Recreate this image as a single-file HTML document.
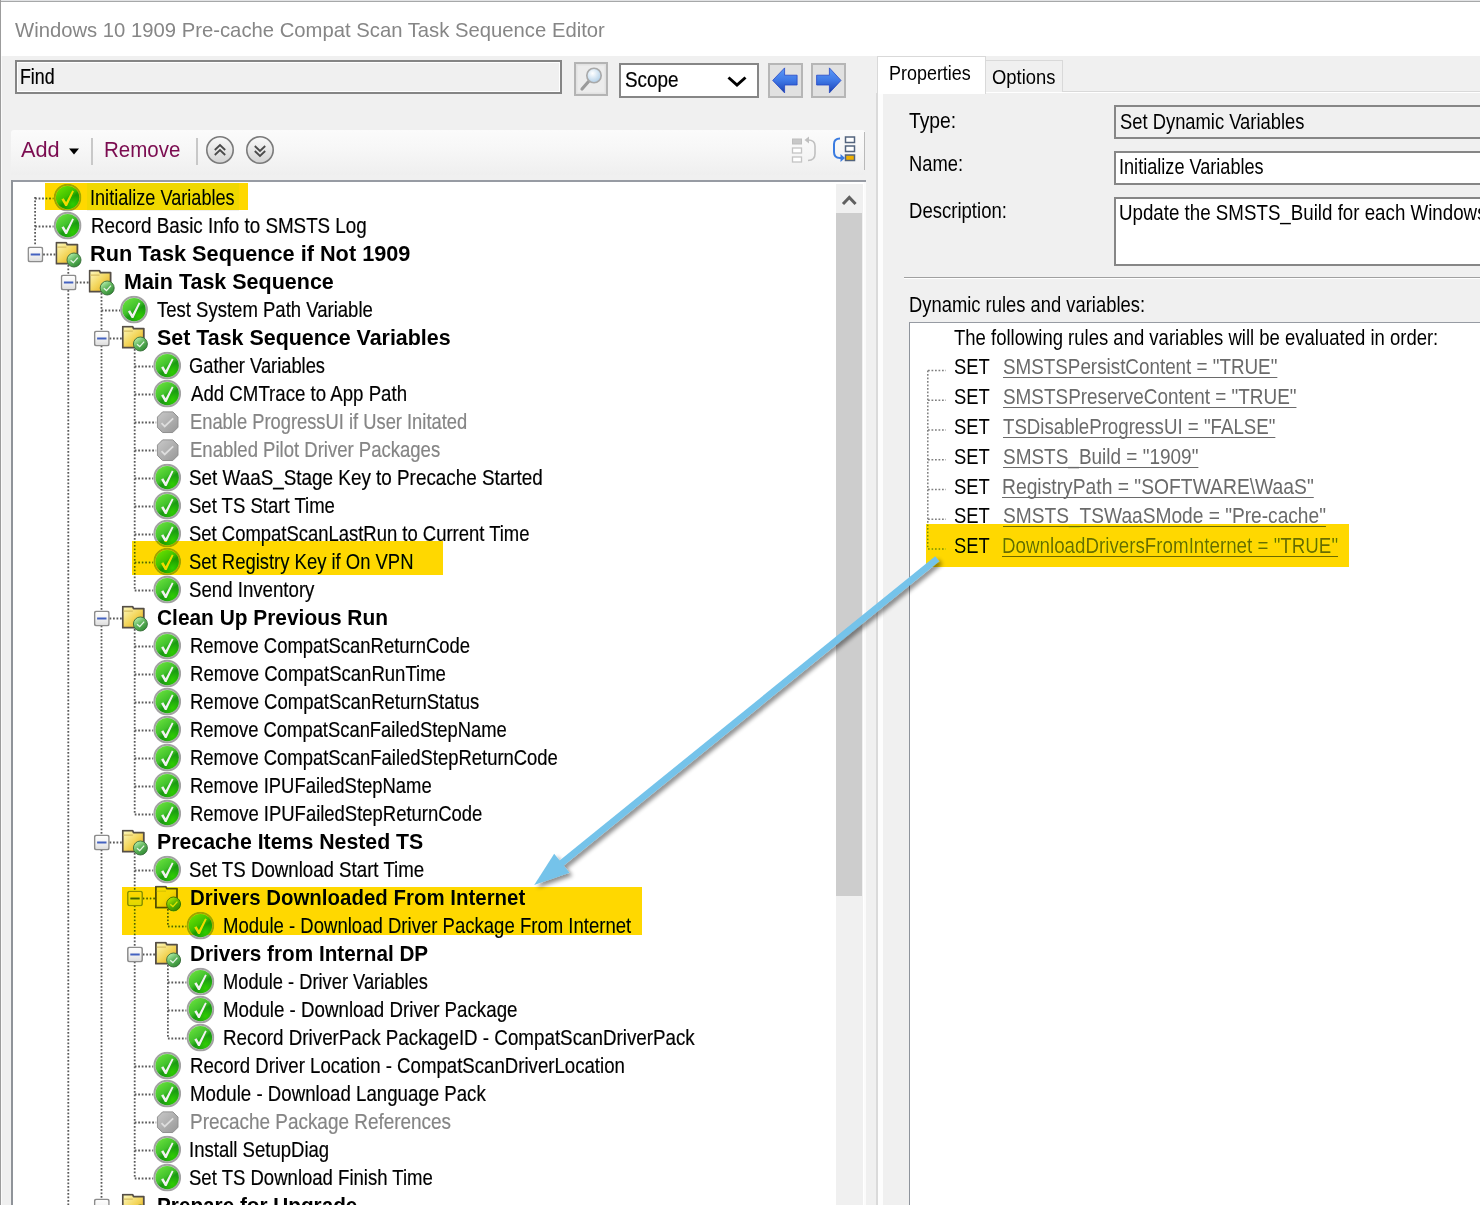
<!DOCTYPE html><html><head><meta charset="utf-8"><style>
html,body{margin:0;padding:0}
body{width:1480px;height:1205px;position:relative;overflow:hidden;background:#f0f0f0;font-family:"Liberation Sans",sans-serif}
.a{position:absolute}
.t{position:absolute;white-space:nowrap;line-height:1;transform-origin:0 0;font-family:"Liberation Sans",sans-serif;-webkit-text-stroke:0.2px currentColor}
</style></head><body>
<div class="a" style="left:0px;top:0px;width:1480px;height:1px;background:#e2e3e5"></div>
<div class="a" style="left:0px;top:1px;width:1480px;height:1px;background:#a6a8a9"></div>
<div class="a" style="left:0px;top:0px;width:1px;height:1205px;background:#9c9c9c"></div>
<div class="a" style="left:1px;top:2px;width:1479px;height:54px;background:#fff"></div>
<div class="a" style="left:1px;top:56px;width:1px;height:1149px;background:#fafafa"></div>
<div class="a" style="left:15px;top:60px;width:547px;height:34px;border:2px solid #858585;box-sizing:border-box;background:#f0f0f0;box-shadow:inset 0 0 0 1px #fff"></div>
<div class="a" style="left:574px;top:62px;width:34px;height:34px;border:2px solid #b4b4b4;box-sizing:border-box;background:#ececec;box-shadow:inset 0 0 0 1.5px #e2e2e2"></div>
<svg class="a" style="left:574px;top:62px" width="34" height="34" viewBox="0 0 34 34">
<defs><radialGradient id="lens" cx="40%" cy="35%" r="60%"><stop offset="0" stop-color="#ffffff"/><stop offset="1" stop-color="#b9d4ea"/></radialGradient></defs>
<line x1="8" y1="27" x2="15" y2="19" stroke="#9a9a9a" stroke-width="3.2" stroke-linecap="round"/>
<circle cx="20" cy="13.5" r="7.2" fill="url(#lens)" stroke="#a9a9a9" stroke-width="1.6"/>
</svg>
<div class="a" style="left:619px;top:63px;width:140px;height:35px;border:2px solid #868686;box-sizing:border-box;background:#fff"></div>
<svg class="a" style="left:726px;top:75px" width="22" height="13" viewBox="0 0 22 13"><path d="M2.5 2.5 L11 10 L19.5 2.5" fill="none" stroke="#000" stroke-width="3"/></svg>
<div class="a" style="left:768px;top:63px;width:35px;height:35px;border:2px solid #b6b6b6;box-sizing:border-box;background:#e1e1e1"></div>
<div class="a" style="left:811px;top:63px;width:35px;height:35px;border:2px solid #b6b6b6;box-sizing:border-box;background:#e1e1e1"></div>
<svg class="a" style="left:768px;top:63px" width="35" height="35" viewBox="0 0 35 35">
<defs><linearGradient id="ab" x1="0" y1="0" x2="0" y2="1"><stop offset="0" stop-color="#5c9af6"/><stop offset="0.5" stop-color="#3f78e6"/><stop offset="0.8" stop-color="#2a58c8"/><stop offset="1" stop-color="#1e3a8a"/></linearGradient></defs>
<path d="M4.7 17.4 L16.6 4.9 L16.6 12.2 L29.1 12.2 L29.1 22 L16.6 22 L16.6 29.9 Z" fill="url(#ab)" stroke="#2447c8" stroke-width="0.8"/>
</svg>
<svg class="a" style="left:811px;top:63px" width="35" height="35" viewBox="0 0 35 35">
<path d="M30 17.4 L18.4 4.9 L18.4 12.2 L5.6 12.2 L5.6 22 L18.4 22 L18.4 29.9 Z" fill="url(#ab)" stroke="#2447c8" stroke-width="0.8"/>
</svg>
<div class="a" style="left:11px;top:130px;width:854px;height:45px;background:linear-gradient(#fbfbfb,#f7f7f7 40%,#efefef);border-radius:3px 3px 0 0"></div>
<div class="a" style="left:864px;top:132px;width:1px;height:38px;background:#b9b9b9"></div>
<svg class="a" style="left:68px;top:147px" width="12" height="9" viewBox="0 0 12 9"><path d="M1 1.5 L11 1.5 L6 7.5Z" fill="#000"/></svg>
<div class="a" style="left:91px;top:138px;width:1.5px;height:27px;background:#c8c8c8"></div>
<div class="a" style="left:196px;top:138px;width:1.5px;height:27px;background:#c8c8c8"></div>
<svg class="a" style="left:202px;top:132px" width="36" height="36" viewBox="0 0 36 36">
<defs><linearGradient id="cb220" x1="0" y1="0" x2="0" y2="1"><stop offset="0" stop-color="#fafafa"/><stop offset="1" stop-color="#d2d2d2"/></linearGradient></defs>
<circle cx="18" cy="18" r="13.2" fill="url(#cb220)" stroke="#7a7a7a" stroke-width="1.6"/>
<path d="M12.8 18 L18 13 L23.2 18 M12.8 23 L18 18 L23.2 23" fill="none" stroke="#4a4a4a" stroke-width="1.8"/></svg>
<svg class="a" style="left:241.7px;top:132px" width="36" height="36" viewBox="0 0 36 36">
<defs><linearGradient id="cb259" x1="0" y1="0" x2="0" y2="1"><stop offset="0" stop-color="#fafafa"/><stop offset="1" stop-color="#d2d2d2"/></linearGradient></defs>
<circle cx="18" cy="18" r="13.2" fill="url(#cb259)" stroke="#7a7a7a" stroke-width="1.6"/>
<path d="M12.8 14 L18 19 L23.2 14 M12.8 19 L18 24 L23.2 19" fill="none" stroke="#4a4a4a" stroke-width="1.8"/></svg>
<svg class="a" style="left:790px;top:135px" width="30" height="30" viewBox="0 0 30 30">
<rect x="2.5" y="4" width="9" height="5" fill="#c8c8c8" stroke="#bdbdbd"/>
<rect x="2.5" y="13" width="9" height="5" fill="#fff" stroke="#c4c4c4" stroke-width="1.3"/>
<rect x="2.5" y="22" width="9" height="5" fill="#fff" stroke="#c4c4c4" stroke-width="1.3"/>
<path d="M18 25.5 Q25 25.5 25 19 L25 11 Q25 5 18 5" fill="none" stroke="#c0c0c0" stroke-width="1.6"/>
<path d="M14.5 5 L19 1.5 L19 8.5Z" fill="#c0c0c0"/>
</svg>
<svg class="a" style="left:830px;top:135px" width="30" height="30" viewBox="0 0 30 30">
<rect x="15.5" y="2" width="9" height="5.5" fill="#fff" stroke="#53647e" stroke-width="1.5"/>
<rect x="15.5" y="11" width="9" height="5.5" fill="#fff" stroke="#53647e" stroke-width="1.5"/>
<rect x="15.5" y="20" width="9" height="5.5" fill="#f0b000" stroke="#53647e" stroke-width="1.5"/>
<path d="M10 3.5 Q4 3.5 4 9 L4 17 Q4 23 10 23 L12 23" fill="none" stroke="#3a7be0" stroke-width="2"/>
<path d="M10.5 19 L15 23 L10.5 27Z" fill="#3a7be0"/>
</svg>
<div class="a" style="left:11px;top:180px;width:855px;height:1025px;background:#fff"></div>
<div class="a" style="left:11px;top:180px;width:855px;height:2px;background:#979ba3"></div>
<div class="a" style="left:11px;top:180px;width:2px;height:1025px;background:#8f9399"></div>
<div class="a" style="left:864px;top:182px;width:2px;height:1023px;background:#fbfbfb"></div>
<div class="a" style="left:836px;top:184px;width:27px;height:1021px;background:#f0f0f0"></div>
<div class="a" style="left:836px;top:213px;width:26px;height:683px;background:#cdcdcd"></div>
<svg class="a" style="left:836px;top:184px" width="27" height="29" viewBox="0 0 27 29"><path d="M7 20 L13.3 13.5 L19.6 20" fill="none" stroke="#606060" stroke-width="3"/></svg>
<div class="a" style="left:866px;top:56px;width:11px;height:1149px;background:#f0f0f0"></div>
<div class="a" style="left:876px;top:93px;width:1.6000000000000227px;height:1112px;background:#dadada"></div>
<div class="a" style="left:877.6px;top:93px;width:5.399999999999977px;height:1112px;background:#fdfdfd"></div>
<svg class="a" style="left:0;top:0" width="836" height="1205" viewBox="0 0 836 1205">
<defs>
<linearGradient id="gg" x1="0.2" y1="0.1" x2="0.8" y2="0.9"><stop offset="0" stop-color="#62dc3a"/><stop offset="0.42" stop-color="#42c22c"/><stop offset="0.62" stop-color="#1a9a12"/><stop offset="1" stop-color="#22a812"/></linearGradient>
<radialGradient id="gr" cx="0.72" cy="0.78" r="0.4"><stop offset="0" stop-color="#30d000" stop-opacity="0.9"/><stop offset="1" stop-color="#30d000" stop-opacity="0"/></radialGradient>
<linearGradient id="dg" x1="0.1" y1="0.1" x2="0.9" y2="0.9"><stop offset="0" stop-color="#c4c4c4"/><stop offset="1" stop-color="#9c9c9c"/></linearGradient>
<linearGradient id="fg" x1="0.1" y1="0.1" x2="0.9" y2="0.95"><stop offset="0" stop-color="#fbf3b0"/><stop offset="0.5" stop-color="#f3d65c"/><stop offset="1" stop-color="#e6a91c"/></linearGradient>
<linearGradient id="bg2" x1="0.2" y1="0.1" x2="0.8" y2="0.95"><stop offset="0" stop-color="#b0eca8"/><stop offset="0.45" stop-color="#5fb45c"/><stop offset="1" stop-color="#2f8a32"/></linearGradient>
<linearGradient id="mg" x1="0" y1="0" x2="0" y2="1"><stop offset="0" stop-color="#ffffff"/><stop offset="0.5" stop-color="#f3f3f3"/><stop offset="1" stop-color="#dcdcdc"/></linearGradient>
<symbol id="ck" viewBox="0 0 28 28">
<circle cx="14" cy="14" r="12.9" fill="#e2e2e2" stroke="#a2a2a2" stroke-width="2"/>
<circle cx="14" cy="14" r="11.7" fill="url(#gg)"/>
<circle cx="14" cy="14" r="11.7" fill="url(#gr)"/>
<path d="M7.9 15.9 L10.1 14.6 L12.5 18.6 L18.7 6.9 L20.3 7.6 L13.4 22.4 L11.7 22.4 Z" fill="#f2f2f2"/>
</symbol>
<symbol id="dis" viewBox="0 0 22 22">
<path d="M6 0.6 L16 0.6 L21.4 6 L21.4 16 L16 21.4 L6 21.4 L0.6 16 L0.6 6 Z" fill="url(#dg)" stroke="#8a8a8a" stroke-width="1"/>
<path d="M4.8 12 L8 15.2 L16.5 7.2" fill="none" stroke="#dedede" stroke-width="1.8"/>
</symbol>
<symbol id="fd" viewBox="0 0 30 28">
<path d="M0.9 1 L10.8 1 L11.8 3 L22 3 L22 22.1 L0.9 22.1 Z" fill="url(#fg)" stroke="#554e46" stroke-width="1.8" stroke-linejoin="round"/>
<path d="M1.8 5.6 L11 5.6" stroke="#d6bd62" stroke-width="1.3"/>
<circle cx="18.6" cy="18.4" r="7" fill="url(#bg2)" stroke="#356b37" stroke-width="0.9"/>
<path d="M15.2 18.6 L17.9 21 L22.4 16" fill="none" stroke="#e4f4e4" stroke-width="1.3"/>
</symbol>
<symbol id="mb" viewBox="0 0 16 16">
<rect x="0.8" y="0.8" width="14.4" height="14.4" rx="2" fill="url(#mg)" stroke="#8c8c8c" stroke-width="1.5"/>
<rect x="3.3" y="7" width="9.4" height="2" fill="#4462c0"/>
</symbol>
</defs>
<line x1="68.30000000000001" y1="290" x2="68.30000000000001" y2="1205" stroke="#5a5a5a" stroke-width="1.8" stroke-dasharray="1.75 1.75"/>
<line x1="35.1" y1="197" x2="35.1" y2="246" stroke="#5a5a5a" stroke-width="1.8" stroke-dasharray="1.75 1.75"/>
<line x1="68.30000000000001" y1="265" x2="68.30000000000001" y2="274" stroke="#5a5a5a" stroke-width="1.8" stroke-dasharray="1.75 1.75"/>
<line x1="101.5" y1="293" x2="101.5" y2="1205" stroke="#5a5a5a" stroke-width="1.8" stroke-dasharray="1.75 1.75"/>
<line x1="134.70000000000002" y1="349" x2="134.70000000000002" y2="589" stroke="#5a5a5a" stroke-width="1.8" stroke-dasharray="1.75 1.75"/>
<line x1="134.70000000000002" y1="629" x2="134.70000000000002" y2="813" stroke="#5a5a5a" stroke-width="1.8" stroke-dasharray="1.75 1.75"/>
<line x1="134.70000000000002" y1="853" x2="134.70000000000002" y2="1177" stroke="#5a5a5a" stroke-width="1.8" stroke-dasharray="1.75 1.75"/>
<line x1="167.9" y1="909" x2="167.9" y2="925" stroke="#5a5a5a" stroke-width="1.8" stroke-dasharray="1.75 1.75"/>
<line x1="167.9" y1="965" x2="167.9" y2="1037" stroke="#5a5a5a" stroke-width="1.8" stroke-dasharray="1.75 1.75"/>
<line x1="35.1" y1="198.5" x2="53.599999999999994" y2="198.5" stroke="#5a5a5a" stroke-width="1.8" stroke-dasharray="1.75 1.75"/>
<use href="#ck" x="53.599999999999994" y="183.6" width="28" height="28"/>
<line x1="35.1" y1="226.5" x2="53.599999999999994" y2="226.5" stroke="#5a5a5a" stroke-width="1.8" stroke-dasharray="1.75 1.75"/>
<use href="#ck" x="53.599999999999994" y="211.6" width="28" height="28"/>
<line x1="43.1" y1="254.5" x2="55.599999999999994" y2="254.5" stroke="#5a5a5a" stroke-width="1.8" stroke-dasharray="1.75 1.75"/>
<use href="#fd" x="55.39999999999999" y="241.6" width="30" height="28"/>
<use href="#mb" x="27.400000000000002" y="246.5" width="16" height="16"/>
<line x1="76.30000000000001" y1="282.5" x2="88.8" y2="282.5" stroke="#5a5a5a" stroke-width="1.8" stroke-dasharray="1.75 1.75"/>
<use href="#fd" x="88.6" y="269.6" width="30" height="28"/>
<use href="#mb" x="60.60000000000001" y="274.5" width="16" height="16"/>
<line x1="101.5" y1="310.5" x2="120.0" y2="310.5" stroke="#5a5a5a" stroke-width="1.8" stroke-dasharray="1.75 1.75"/>
<use href="#ck" x="120.0" y="295.6" width="28" height="28"/>
<line x1="109.5" y1="338.5" x2="122.0" y2="338.5" stroke="#5a5a5a" stroke-width="1.8" stroke-dasharray="1.75 1.75"/>
<use href="#fd" x="121.8" y="325.6" width="30" height="28"/>
<use href="#mb" x="93.8" y="330.5" width="16" height="16"/>
<line x1="134.70000000000002" y1="366.5" x2="153.2" y2="366.5" stroke="#5a5a5a" stroke-width="1.8" stroke-dasharray="1.75 1.75"/>
<use href="#ck" x="153.2" y="351.6" width="28" height="28"/>
<line x1="134.70000000000002" y1="394.5" x2="153.2" y2="394.5" stroke="#5a5a5a" stroke-width="1.8" stroke-dasharray="1.75 1.75"/>
<use href="#ck" x="153.2" y="379.6" width="28" height="28"/>
<line x1="134.70000000000002" y1="422.5" x2="156.2" y2="422.5" stroke="#5a5a5a" stroke-width="1.8" stroke-dasharray="1.75 1.75"/>
<use href="#dis" x="156.7" y="411.2" width="22" height="22"/>
<line x1="134.70000000000002" y1="450.5" x2="156.2" y2="450.5" stroke="#5a5a5a" stroke-width="1.8" stroke-dasharray="1.75 1.75"/>
<use href="#dis" x="156.7" y="439.2" width="22" height="22"/>
<line x1="134.70000000000002" y1="478.5" x2="153.2" y2="478.5" stroke="#5a5a5a" stroke-width="1.8" stroke-dasharray="1.75 1.75"/>
<use href="#ck" x="153.2" y="463.6" width="28" height="28"/>
<line x1="134.70000000000002" y1="506.5" x2="153.2" y2="506.5" stroke="#5a5a5a" stroke-width="1.8" stroke-dasharray="1.75 1.75"/>
<use href="#ck" x="153.2" y="491.6" width="28" height="28"/>
<line x1="134.70000000000002" y1="534.5" x2="153.2" y2="534.5" stroke="#5a5a5a" stroke-width="1.8" stroke-dasharray="1.75 1.75"/>
<use href="#ck" x="153.2" y="519.6" width="28" height="28"/>
<line x1="134.70000000000002" y1="562.5" x2="153.2" y2="562.5" stroke="#5a5a5a" stroke-width="1.8" stroke-dasharray="1.75 1.75"/>
<use href="#ck" x="153.2" y="547.6" width="28" height="28"/>
<line x1="134.70000000000002" y1="590.5" x2="153.2" y2="590.5" stroke="#5a5a5a" stroke-width="1.8" stroke-dasharray="1.75 1.75"/>
<use href="#ck" x="153.2" y="575.6" width="28" height="28"/>
<line x1="109.5" y1="618.5" x2="122.0" y2="618.5" stroke="#5a5a5a" stroke-width="1.8" stroke-dasharray="1.75 1.75"/>
<use href="#fd" x="121.8" y="605.6" width="30" height="28"/>
<use href="#mb" x="93.8" y="610.5" width="16" height="16"/>
<line x1="134.70000000000002" y1="646.5" x2="153.2" y2="646.5" stroke="#5a5a5a" stroke-width="1.8" stroke-dasharray="1.75 1.75"/>
<use href="#ck" x="153.2" y="631.6" width="28" height="28"/>
<line x1="134.70000000000002" y1="674.5" x2="153.2" y2="674.5" stroke="#5a5a5a" stroke-width="1.8" stroke-dasharray="1.75 1.75"/>
<use href="#ck" x="153.2" y="659.6" width="28" height="28"/>
<line x1="134.70000000000002" y1="702.5" x2="153.2" y2="702.5" stroke="#5a5a5a" stroke-width="1.8" stroke-dasharray="1.75 1.75"/>
<use href="#ck" x="153.2" y="687.6" width="28" height="28"/>
<line x1="134.70000000000002" y1="730.5" x2="153.2" y2="730.5" stroke="#5a5a5a" stroke-width="1.8" stroke-dasharray="1.75 1.75"/>
<use href="#ck" x="153.2" y="715.6" width="28" height="28"/>
<line x1="134.70000000000002" y1="758.5" x2="153.2" y2="758.5" stroke="#5a5a5a" stroke-width="1.8" stroke-dasharray="1.75 1.75"/>
<use href="#ck" x="153.2" y="743.6" width="28" height="28"/>
<line x1="134.70000000000002" y1="786.5" x2="153.2" y2="786.5" stroke="#5a5a5a" stroke-width="1.8" stroke-dasharray="1.75 1.75"/>
<use href="#ck" x="153.2" y="771.6" width="28" height="28"/>
<line x1="134.70000000000002" y1="814.5" x2="153.2" y2="814.5" stroke="#5a5a5a" stroke-width="1.8" stroke-dasharray="1.75 1.75"/>
<use href="#ck" x="153.2" y="799.6" width="28" height="28"/>
<line x1="109.5" y1="842.5" x2="122.0" y2="842.5" stroke="#5a5a5a" stroke-width="1.8" stroke-dasharray="1.75 1.75"/>
<use href="#fd" x="121.8" y="829.6" width="30" height="28"/>
<use href="#mb" x="93.8" y="834.5" width="16" height="16"/>
<line x1="134.70000000000002" y1="870.5" x2="153.2" y2="870.5" stroke="#5a5a5a" stroke-width="1.8" stroke-dasharray="1.75 1.75"/>
<use href="#ck" x="153.2" y="855.6" width="28" height="28"/>
<line x1="142.70000000000002" y1="898.5" x2="155.2" y2="898.5" stroke="#5a5a5a" stroke-width="1.8" stroke-dasharray="1.75 1.75"/>
<use href="#fd" x="155.0" y="885.6" width="30" height="28"/>
<use href="#mb" x="127.00000000000001" y="890.5" width="16" height="16"/>
<line x1="167.9" y1="926.5" x2="186.4" y2="926.5" stroke="#5a5a5a" stroke-width="1.8" stroke-dasharray="1.75 1.75"/>
<use href="#ck" x="186.4" y="911.6" width="28" height="28"/>
<line x1="142.70000000000002" y1="954.5" x2="155.2" y2="954.5" stroke="#5a5a5a" stroke-width="1.8" stroke-dasharray="1.75 1.75"/>
<use href="#fd" x="155.0" y="941.6" width="30" height="28"/>
<use href="#mb" x="127.00000000000001" y="946.5" width="16" height="16"/>
<line x1="167.9" y1="982.5" x2="186.4" y2="982.5" stroke="#5a5a5a" stroke-width="1.8" stroke-dasharray="1.75 1.75"/>
<use href="#ck" x="186.4" y="967.6" width="28" height="28"/>
<line x1="167.9" y1="1010.5" x2="186.4" y2="1010.5" stroke="#5a5a5a" stroke-width="1.8" stroke-dasharray="1.75 1.75"/>
<use href="#ck" x="186.4" y="995.6" width="28" height="28"/>
<line x1="167.9" y1="1038.5" x2="186.4" y2="1038.5" stroke="#5a5a5a" stroke-width="1.8" stroke-dasharray="1.75 1.75"/>
<use href="#ck" x="186.4" y="1023.6" width="28" height="28"/>
<line x1="134.70000000000002" y1="1066.5" x2="153.2" y2="1066.5" stroke="#5a5a5a" stroke-width="1.8" stroke-dasharray="1.75 1.75"/>
<use href="#ck" x="153.2" y="1051.6" width="28" height="28"/>
<line x1="134.70000000000002" y1="1094.5" x2="153.2" y2="1094.5" stroke="#5a5a5a" stroke-width="1.8" stroke-dasharray="1.75 1.75"/>
<use href="#ck" x="153.2" y="1079.6" width="28" height="28"/>
<line x1="134.70000000000002" y1="1122.5" x2="156.2" y2="1122.5" stroke="#5a5a5a" stroke-width="1.8" stroke-dasharray="1.75 1.75"/>
<use href="#dis" x="156.7" y="1111.2" width="22" height="22"/>
<line x1="134.70000000000002" y1="1150.5" x2="153.2" y2="1150.5" stroke="#5a5a5a" stroke-width="1.8" stroke-dasharray="1.75 1.75"/>
<use href="#ck" x="153.2" y="1135.6" width="28" height="28"/>
<line x1="134.70000000000002" y1="1178.5" x2="153.2" y2="1178.5" stroke="#5a5a5a" stroke-width="1.8" stroke-dasharray="1.75 1.75"/>
<use href="#ck" x="153.2" y="1163.6" width="28" height="28"/>
<line x1="109.5" y1="1206.5" x2="122.0" y2="1206.5" stroke="#5a5a5a" stroke-width="1.8" stroke-dasharray="1.75 1.75"/>
<use href="#fd" x="121.8" y="1193.6" width="30" height="28"/>
<use href="#mb" x="93.8" y="1198.5" width="16" height="16"/>
</svg>
<div class="a" style="left:883px;top:93px;width:597px;height:1112px;background:#f0f0f0"></div>
<div class="a" style="left:877px;top:91px;width:603px;height:1px;background:#d9d9d9"></div>
<div class="a" style="left:877px;top:92px;width:603px;height:1px;background:#fff"></div>
<div class="a" style="left:985px;top:60px;width:78px;height:32px;border:1px solid #d9d9d9;border-bottom:none;box-sizing:border-box;background:#f0f0f0"></div>
<div class="a" style="left:877px;top:56px;width:109px;height:38px;border:1px solid #d9d9d9;border-bottom:none;box-sizing:border-box;background:#fff"></div>
<div class="a" style="left:1114px;top:105px;width:366px;height:34px;border:2px solid #868686;border-right:none;box-sizing:border-box;background:#f0f0f0"></div>
<div class="a" style="left:1114px;top:151px;width:366px;height:34px;border:2px solid #868686;border-right:none;box-sizing:border-box;background:#fff"></div>
<div class="a" style="left:1114px;top:197px;width:366px;height:68.5px;border:2px solid #868686;border-right:none;box-sizing:border-box;background:#fff"></div>
<div class="a" style="left:904px;top:277px;width:576px;height:1.3999999999999773px;background:#a0a0a0"></div>
<div class="a" style="left:904px;top:278.4px;width:576px;height:1.0px;background:#fff"></div>
<div class="a" style="left:909px;top:322px;width:571px;height:883px;background:#fff;border-left:1.8px solid #8f949c;border-top:1.8px solid #979ba3;box-sizing:border-box"></div>
<svg class="a" style="left:900px;top:320px" width="80" height="260" viewBox="900 320 80 260">
<line x1="927.8" y1="370.5" x2="927.8" y2="549" stroke="#7e7e7e" stroke-width="1.5" stroke-dasharray="1.75 1.75"/>
<line x1="928" y1="370.5" x2="946" y2="370.5" stroke="#7e7e7e" stroke-width="1.5" stroke-dasharray="1.75 1.75"/>
<line x1="928" y1="400.25" x2="946" y2="400.25" stroke="#7e7e7e" stroke-width="1.5" stroke-dasharray="1.75 1.75"/>
<line x1="928" y1="430.0" x2="946" y2="430.0" stroke="#7e7e7e" stroke-width="1.5" stroke-dasharray="1.75 1.75"/>
<line x1="928" y1="459.75" x2="946" y2="459.75" stroke="#7e7e7e" stroke-width="1.5" stroke-dasharray="1.75 1.75"/>
<line x1="928" y1="489.5" x2="946" y2="489.5" stroke="#7e7e7e" stroke-width="1.5" stroke-dasharray="1.75 1.75"/>
<line x1="928" y1="519.25" x2="946" y2="519.25" stroke="#7e7e7e" stroke-width="1.5" stroke-dasharray="1.75 1.75"/>
<line x1="928" y1="549.0" x2="946" y2="549.0" stroke="#7e7e7e" stroke-width="1.5" stroke-dasharray="1.75 1.75"/>
</svg>
<span class="t" style="left:15.30px;top:19.00px;font-size:21px;transform:scaleX(0.9649);color:#868686;-webkit-text-stroke:0">Windows 10 1909 Pre-cache Compat Scan Task Sequence Editor</span>
<span class="t" style="left:19.97px;top:67.00px;font-size:21.5px;transform:scaleX(0.8278);color:#000">Find</span>
<span class="t" style="left:624.50px;top:70.00px;font-size:21.5px;transform:scaleX(0.8783);color:#000">Scope</span>
<span class="t" style="left:20.60px;top:140.00px;font-size:21.5px;transform:scaleX(1.0081);color:#7b0c50;-webkit-text-stroke:0">Add</span>
<span class="t" style="left:103.85px;top:140.00px;font-size:21.5px;transform:scaleX(0.9539);color:#7b0c50;-webkit-text-stroke:0">Remove</span>
<span class="t" style="left:89.75px;top:187.00px;font-size:22px;transform:scaleX(0.8234);color:#000">Initialize Variables</span>
<span class="t" style="left:90.55px;top:215.00px;font-size:22px;transform:scaleX(0.8541);color:#000">Record Basic Info to SMSTS Log</span>
<span class="t" style="left:90.41px;top:243.00px;font-size:22px;transform:scaleX(0.9865);color:#000;font-weight:bold;-webkit-text-stroke:0">Run Task Sequence if Not 1909</span>
<span class="t" style="left:123.62px;top:271.00px;font-size:22px;transform:scaleX(0.9768);color:#000;font-weight:bold;-webkit-text-stroke:0">Main Task Sequence</span>
<span class="t" style="left:156.60px;top:299.00px;font-size:22px;transform:scaleX(0.8417);color:#000">Test System Path Variable</span>
<span class="t" style="left:156.60px;top:327.00px;font-size:22px;transform:scaleX(0.9734);color:#000;font-weight:bold;-webkit-text-stroke:0">Set Task Sequence Variables</span>
<span class="t" style="left:188.97px;top:355.00px;font-size:22px;transform:scaleX(0.8322);color:#000">Gather Variables</span>
<span class="t" style="left:191.00px;top:383.00px;font-size:22px;transform:scaleX(0.8479);color:#000">Add CMTrace to App Path</span>
<span class="t" style="left:190.17px;top:411.00px;font-size:22px;transform:scaleX(0.8333);color:#858585">Enable ProgressUI if User Initated</span>
<span class="t" style="left:190.16px;top:439.00px;font-size:22px;transform:scaleX(0.8418);color:#858585">Enabled Pilot Driver Packages</span>
<span class="t" style="left:188.94px;top:467.00px;font-size:22px;transform:scaleX(0.8577);color:#000">Set WaaS_Stage Key to Precache Started</span>
<span class="t" style="left:188.96px;top:495.00px;font-size:22px;transform:scaleX(0.8422);color:#000">Set TS Start Time</span>
<span class="t" style="left:188.96px;top:523.00px;font-size:22px;transform:scaleX(0.8387);color:#000">Set CompatScanLastRun to Current Time</span>
<span class="t" style="left:188.96px;top:551.00px;font-size:22px;transform:scaleX(0.8384);color:#000">Set Registry Key if On VPN</span>
<span class="t" style="left:188.95px;top:579.00px;font-size:22px;transform:scaleX(0.8477);color:#000">Send Inventory</span>
<span class="t" style="left:156.60px;top:607.00px;font-size:22px;transform:scaleX(0.9492);color:#000;font-weight:bold;-webkit-text-stroke:0">Clean Up Previous Run</span>
<span class="t" style="left:190.16px;top:635.00px;font-size:22px;transform:scaleX(0.8391);color:#000">Remove CompatScanReturnCode</span>
<span class="t" style="left:190.16px;top:663.00px;font-size:22px;transform:scaleX(0.8429);color:#000">Remove CompatScanRunTime</span>
<span class="t" style="left:190.16px;top:691.00px;font-size:22px;transform:scaleX(0.8418);color:#000">Remove CompatScanReturnStatus</span>
<span class="t" style="left:190.16px;top:719.00px;font-size:22px;transform:scaleX(0.8358);color:#000">Remove CompatScanFailedStepName</span>
<span class="t" style="left:190.16px;top:747.00px;font-size:22px;transform:scaleX(0.8379);color:#000">Remove CompatScanFailedStepReturnCode</span>
<span class="t" style="left:190.16px;top:775.00px;font-size:22px;transform:scaleX(0.8374);color:#000">Remove IPUFailedStepName</span>
<span class="t" style="left:190.16px;top:803.00px;font-size:22px;transform:scaleX(0.8388);color:#000">Remove IPUFailedStepReturnCode</span>
<span class="t" style="left:156.83px;top:831.00px;font-size:22px;transform:scaleX(0.9680);color:#000;font-weight:bold;-webkit-text-stroke:0">Precache Items Nested TS</span>
<span class="t" style="left:188.95px;top:859.00px;font-size:22px;transform:scaleX(0.8485);color:#000">Set TS Download Start Time</span>
<span class="t" style="left:190.07px;top:887.00px;font-size:22px;transform:scaleX(0.9298);color:#000;font-weight:bold;-webkit-text-stroke:0">Drivers Downloaded From Internet</span>
<span class="t" style="left:223.36px;top:915.00px;font-size:22px;transform:scaleX(0.8431);color:#000">Module - Download Driver Package From Internet</span>
<span class="t" style="left:190.06px;top:943.00px;font-size:22px;transform:scaleX(0.9411);color:#000;font-weight:bold;-webkit-text-stroke:0">Drivers from Internal DP</span>
<span class="t" style="left:223.37px;top:971.00px;font-size:22px;transform:scaleX(0.8311);color:#000">Module - Driver Variables</span>
<span class="t" style="left:223.35px;top:999.00px;font-size:22px;transform:scaleX(0.8509);color:#000">Module - Download Driver Package</span>
<span class="t" style="left:223.35px;top:1027.00px;font-size:22px;transform:scaleX(0.8536);color:#000">Record DriverPack PackageID - CompatScanDriverPack</span>
<span class="t" style="left:190.15px;top:1055.00px;font-size:22px;transform:scaleX(0.8468);color:#000">Record Driver Location - CompatScanDriverLocation</span>
<span class="t" style="left:190.15px;top:1083.00px;font-size:22px;transform:scaleX(0.8486);color:#000">Module - Download Language Pack</span>
<span class="t" style="left:190.14px;top:1111.00px;font-size:22px;transform:scaleX(0.8608);color:#858585">Precache Package References</span>
<span class="t" style="left:189.31px;top:1139.00px;font-size:22px;transform:scaleX(0.8425);color:#000">Install SetupDiag</span>
<span class="t" style="left:188.96px;top:1167.00px;font-size:22px;transform:scaleX(0.8427);color:#000">Set TS Download Finish Time</span>
<span class="t" style="left:156.86px;top:1195.00px;font-size:22px;transform:scaleX(0.9419);color:#000;font-weight:bold;-webkit-text-stroke:0">Prepare for Upgrade</span>
<span class="t" style="left:889.45px;top:62.00px;font-size:21px;transform:scaleX(0.8545);color:#000;-webkit-text-stroke:0">Properties</span>
<span class="t" style="left:992.12px;top:66.00px;font-size:21px;transform:scaleX(0.8762);color:#000;-webkit-text-stroke:0">Options</span>
<span class="t" style="left:909.40px;top:111.00px;font-size:21.5px;transform:scaleX(0.8971);color:#000;-webkit-text-stroke:0">Type:</span>
<span class="t" style="left:909.05px;top:154.00px;font-size:21.5px;transform:scaleX(0.8525);color:#000;-webkit-text-stroke:0">Name:</span>
<span class="t" style="left:909.04px;top:201.00px;font-size:21.5px;transform:scaleX(0.8625);color:#000;-webkit-text-stroke:0">Description:</span>
<span class="t" style="left:909.15px;top:295.00px;font-size:21.5px;transform:scaleX(0.8549);color:#000;-webkit-text-stroke:0">Dynamic rules and variables:</span>
<span class="t" style="left:1120.00px;top:112.00px;font-size:21.5px;transform:scaleX(0.8544);color:#000;-webkit-text-stroke:0">Set Dynamic Variables</span>
<span class="t" style="left:1119.16px;top:157.00px;font-size:21.5px;transform:scaleX(0.8427);color:#000;-webkit-text-stroke:0">Initialize Variables</span>
<span class="t" style="left:1119.13px;top:203.00px;font-size:21.5px;transform:scaleX(0.8712);color:#000;-webkit-text-stroke:0">Update the SMSTS_Build for each Windows 10 builds</span>
<span class="t" style="left:954.00px;top:328.00px;font-size:21.5px;transform:scaleX(0.8603);color:#000;-webkit-text-stroke:0">The following rules and variables will be evaluated in order:</span>
<span class="t" style="left:953.80px;top:357.00px;font-size:21.5px;transform:scaleX(0.8565);color:#000;-webkit-text-stroke:0">SET</span>
<span class="t" style="left:1002.60px;top:357.00px;font-size:21.5px;transform:scaleX(0.8755);color:#6a6a6a;-webkit-text-stroke:0;-webkit-text-stroke:0;text-decoration:underline;text-underline-offset:3px;text-decoration-thickness:1.3px;text-decoration-skip-ink:none">SMSTSPersistContent = "TRUE"</span>
<span class="t" style="left:953.80px;top:387.00px;font-size:21.5px;transform:scaleX(0.8565);color:#000;-webkit-text-stroke:0">SET</span>
<span class="t" style="left:1002.60px;top:387.00px;font-size:21.5px;transform:scaleX(0.8794);color:#6a6a6a;-webkit-text-stroke:0;-webkit-text-stroke:0;text-decoration:underline;text-underline-offset:3px;text-decoration-thickness:1.3px;text-decoration-skip-ink:none">SMSTSPreserveContent = "TRUE"</span>
<span class="t" style="left:953.80px;top:417.00px;font-size:21.5px;transform:scaleX(0.8565);color:#000;-webkit-text-stroke:0">SET</span>
<span class="t" style="left:1002.60px;top:417.00px;font-size:21.5px;transform:scaleX(0.8690);color:#6a6a6a;-webkit-text-stroke:0;-webkit-text-stroke:0;text-decoration:underline;text-underline-offset:3px;text-decoration-thickness:1.3px;text-decoration-skip-ink:none">TSDisableProgressUI = "FALSE"</span>
<span class="t" style="left:953.80px;top:447.00px;font-size:21.5px;transform:scaleX(0.8565);color:#000;-webkit-text-stroke:0">SET</span>
<span class="t" style="left:1002.60px;top:447.00px;font-size:21.5px;transform:scaleX(0.8823);color:#6a6a6a;-webkit-text-stroke:0;-webkit-text-stroke:0;text-decoration:underline;text-underline-offset:3px;text-decoration-thickness:1.3px;text-decoration-skip-ink:none">SMSTS_Build = "1909"</span>
<span class="t" style="left:953.80px;top:477.00px;font-size:21.5px;transform:scaleX(0.8565);color:#000;-webkit-text-stroke:0">SET</span>
<span class="t" style="left:1001.70px;top:477.00px;font-size:21.5px;transform:scaleX(0.8969);color:#6a6a6a;-webkit-text-stroke:0;-webkit-text-stroke:0;text-decoration:underline;text-underline-offset:3px;text-decoration-thickness:1.3px;text-decoration-skip-ink:none">RegistryPath = "SOFTWARE\WaaS"</span>
<span class="t" style="left:953.80px;top:506.00px;font-size:21.5px;transform:scaleX(0.8565);color:#000;-webkit-text-stroke:0">SET</span>
<span class="t" style="left:1002.60px;top:506.00px;font-size:21.5px;transform:scaleX(0.8902);color:#6a6a6a;-webkit-text-stroke:0;-webkit-text-stroke:0;text-decoration:underline;text-underline-offset:3px;text-decoration-thickness:1.3px;text-decoration-skip-ink:none">SMSTS_TSWaaSMode = "Pre-cache"</span>
<span class="t" style="left:953.80px;top:536.00px;font-size:21.5px;transform:scaleX(0.8565);color:#000;-webkit-text-stroke:0">SET</span>
<span class="t" style="left:1001.73px;top:536.00px;font-size:21.5px;transform:scaleX(0.8727);color:#6a6a6a;-webkit-text-stroke:0;-webkit-text-stroke:0;text-decoration:underline;text-underline-offset:3px;text-decoration-thickness:1.3px;text-decoration-skip-ink:none">DownloadDriversFromInternet = "TRUE"</span>
<div class="a" style="left:87px;top:183px;width:152px;height:28px;background:#f0f0f0;mix-blend-mode:darken"></div>
<div class="a" style="left:45px;top:183px;width:203px;height:27px;background:#ffd800;mix-blend-mode:darken"></div>
<div class="a" style="left:132px;top:541px;width:311px;height:34px;background:#ffd800;mix-blend-mode:darken"></div>
<div class="a" style="left:122px;top:887px;width:520px;height:48px;background:#ffd800;mix-blend-mode:darken"></div>
<div class="a" style="left:926px;top:524.3px;width:423.4000000000001px;height:42.700000000000045px;background:#ffd800;mix-blend-mode:darken"></div>
<svg class="a" style="left:0;top:0" width="1480" height="1205" viewBox="0 0 1480 1205">
<defs><filter id="sh" x="-20%" y="-20%" width="140%" height="140%"><feGaussianBlur in="SourceAlpha" stdDeviation="2"/><feOffset dx="2.6" dy="3.2" result="b"/><feComponentTransfer><feFuncA type="linear" slope="0.45"/></feComponentTransfer><feMerge><feMergeNode/><feMergeNode in="SourceGraphic"/></feMerge></filter></defs>
<g filter="url(#sh)">
<line x1="937.3" y1="558.8" x2="558" y2="866" stroke="#74c3ea" stroke-width="6.6" stroke-linecap="butt"/>
<path d="M534.2 885 L554.2 853.8 L569.5 872.8 Z" fill="#74c3ea"/>
</g></svg>
</body></html>
